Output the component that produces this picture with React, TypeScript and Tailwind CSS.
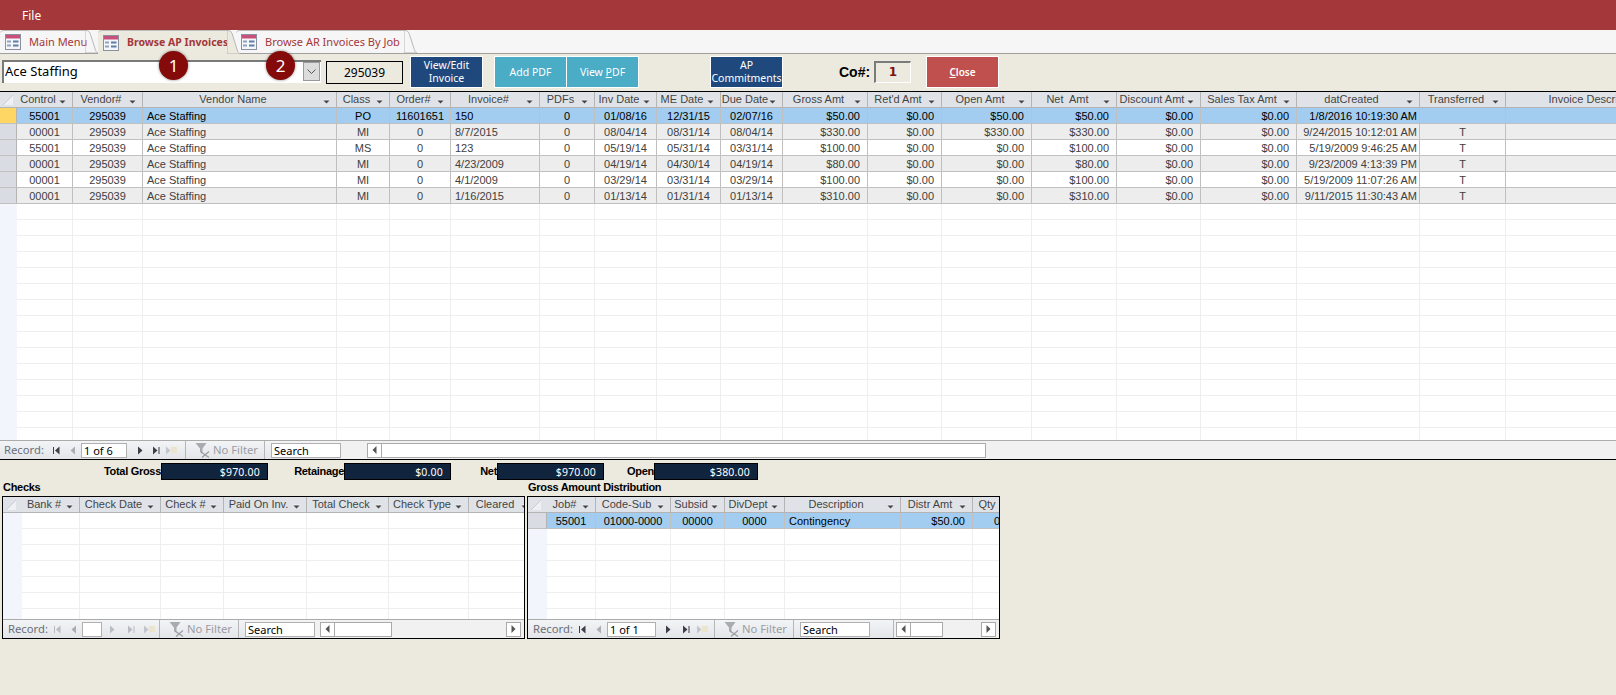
import React from "react";

type Align = "c" | "l" | "r" | "d" | "q";

const MAIN_COLS = "grid grid-cols-[17px_56px_70px_194px_53px_61px_89px_55px_62px_64px_62px_85px_74px_90px_85px_84px_96px_123px_86px_192px]";
const CHECK_COLS = "grid grid-cols-[19px_58px_81px_63px_83px_82px_80px_66px]";
const DIST_COLS = "grid grid-cols-[19px_49px_75px_54px_60px_116px_72px_42px]";

const mainHeaders = ["Control", "Vendor#", "Vendor Name", "Class", "Order#", "Invoice#", "PDFs", "Inv Date", "ME Date", "Due Date", "Gross Amt", "Ret'd Amt", "Open Amt", "Net  Amt", "Discount Amt", "Sales Tax Amt", "datCreated", "Transferred", "Invoice Description"];
const mainAlign: Align[] = ["c", "c", "l", "c", "c", "l", "c", "c", "c", "c", "r", "r", "r", "r", "r", "r", "d", "c", "l"];
const mainRows = [
  ["55001", "295039", "Ace Staffing", "PO", "11601651", "150", "0", "01/08/16", "12/31/15", "02/07/16", "$50.00", "$0.00", "$50.00", "$50.00", "$0.00", "$0.00", "1/8/2016 10:19:30 AM", "", ""],
  ["00001", "295039", "Ace Staffing", "MI", "0", "8/7/2015", "0", "08/04/14", "08/31/14", "08/04/14", "$330.00", "$0.00", "$330.00", "$330.00", "$0.00", "$0.00", "9/24/2015 10:12:01 AM", "T", ""],
  ["55001", "295039", "Ace Staffing", "MS", "0", "123", "0", "05/19/14", "05/31/14", "03/31/14", "$100.00", "$0.00", "$0.00", "$100.00", "$0.00", "$0.00", "5/19/2009 9:46:25 AM", "T", ""],
  ["00001", "295039", "Ace Staffing", "MI", "0", "4/23/2009", "0", "04/19/14", "04/30/14", "04/19/14", "$80.00", "$0.00", "$0.00", "$80.00", "$0.00", "$0.00", "9/23/2009 4:13:39 PM", "T", ""],
  ["00001", "295039", "Ace Staffing", "MI", "0", "4/1/2009", "0", "03/29/14", "03/31/14", "03/29/14", "$100.00", "$0.00", "$0.00", "$100.00", "$0.00", "$0.00", "5/19/2009 11:07:26 AM", "T", ""],
  ["00001", "295039", "Ace Staffing", "MI", "0", "1/16/2015", "0", "01/13/14", "01/31/14", "01/13/14", "$310.00", "$0.00", "$0.00", "$310.00", "$0.00", "$0.00", "9/11/2015 11:30:43 AM", "T", ""],
];

const alignClass: Record<Align, string> = {
  c: "text-center",
  l: "text-left pl-1",
  r: "text-right pr-[7px]",
  d: "text-right pr-[2px]",
  q: "text-left pl-[21px]",
};

function Arrow() {
  return (
    <svg width="7" height="5" viewBox="0 0 7 5" className="shrink-0 mr-[6px] mt-[3px]">
      <path d="M0 0.5h7" stroke="#e8eaee" />
      <path d="M0.5 1.5h6L3.5 4.5z" fill="#444" />
    </svg>
  );
}

function Header({ cols, names }: { cols: string; names: string[] }) {
  return (
    <div className={`${cols} h-4 bg-[#dfe3e8] border-b border-[#b4b4b4] text-[#444] w-max`}>
      <div className="border-r border-[#dfe3e8] overflow-hidden">
        <svg width="17" height="15" viewBox="0 0 17 15">
          <path d="M13 3v10H3z" fill="#eef0f4" />
          <path d="M13 3L3 13" stroke="#c8ccd2" />
        </svg>
      </div>
      {names.map((n) => (
        <div key={n} className="flex items-center border-r border-[#b4b4b4] overflow-hidden whitespace-pre">
          <span className="flex-1 min-w-0 overflow-hidden text-center leading-[15px]">{n}</span>
          <Arrow />
        </div>
      ))}
    </div>
  );
}

function DataRow({ cols, cells, aligns, sel, alt, yellow }: { cols: string; cells: string[]; aligns: Align[]; sel: boolean; alt: boolean; yellow?: boolean }) {
  const bg = sel ? "bg-[#a3cdf0] text-black" : alt ? "bg-[#ededed] text-[#404040]" : "bg-white text-[#404040]";
  return (
    <div className={`${cols} h-4 border-b border-[#c0c0c0] w-max`}>
      <div className={`border-r border-[#b4b4b4] ${yellow ? "bg-[#fdd663]" : "bg-[#d9dde3]"}`} />
      {cells.map((c, i) => (
        <div key={i} className={`${bg} ${alignClass[aligns[i]]} border-r border-[#c0c0c0] overflow-hidden whitespace-nowrap leading-[17px]`}>{c}</div>
      ))}
    </div>
  );
}

function EmptyRows({ cols, count, cells }: { cols: string; count: number; cells: number }) {
  const list = Array.from({ length: cells });
  return (
    <>
      {Array.from({ length: count }).map((_, r) => (
        <div key={r} className={`${cols} h-4 w-max`}>
          <div className="bg-[#f3f5fd] border-b border-[#f3f5fd]" />
          {list.map((_, i) => (
            <div key={i} className="bg-white border-r border-b border-[#eeeeee]" />
          ))}
        </div>
      ))}
    </>
  );
}

function NavIcon({ kind, off }: { kind: "first" | "prev" | "next" | "last"; off: boolean }) {
  const c = off ? "#b9bcc2" : "#3a3f48";
  return (
    <svg width="10" height="9" viewBox="0 0 10 9" className="block">
      {kind === "first" && (<><path d="M1.5 1v7" stroke={c} /><path d="M7.5 0.5v8L3 4.5z" fill={c} /></>)}
      {kind === "prev" && <path d="M7 0.5v8L2.5 4.5z" fill="#a9adb4" />}
      {kind === "next" && <path d="M3 0.5v8l4.5-4z" fill={c} />}
      {kind === "last" && (<><path d="M2 0.5v8l4.5-4z" fill={c} /><path d="M8 1v7" stroke={c} /></>)}
    </svg>
  );
}

function NewIcon() {
  return (
    <svg width="13" height="9" viewBox="0 0 13 9" className="block">
      <path d="M1 0.5v8l4.5-4z" fill="#c2c5ca" />
      <rect x="6" y="1" width="6" height="6" fill="#f2e4b0" />
      <path d="M7 1v6M9 1v6M11 1v6M6 3h6M6 5h6" stroke="#e4e6ea" strokeWidth="0.7" />
    </svg>
  );
}

function Funnel() {
  return (
    <svg width="16" height="16" viewBox="0 0 16 16" className="block shrink-0">
      <path d="M0.5 1h11L7.5 6.5V12L5 10V6.5z" fill="#a8abb0" />
      <path d="M6 10l8 5.5M14 9.5l-7 6" stroke="#9a9da3" strokeWidth="1.2" />
    </svg>
  );
}

function ScrollBtn({ dir }: { dir: "l" | "r" }) {
  return (
    <div className="w-[15px] h-[15px] bg-white border border-[#aaaaaa] flex items-center justify-center shrink-0">
      <svg width="5" height="8" viewBox="0 0 5 8">
        <path d={dir === "l" ? "M4.5 0v8L0.5 4z" : "M0.5 0v8L4.5 4z"} fill="#555" />
      </svg>
    </div>
  );
}

function Nav(props: { inputCls: string; nextCls: string; lastCls: string; newCls: string; filterCls: string; recordCls: string; value: string; off: boolean; children: React.ReactNode }) {
  const { inputCls, nextCls, lastCls, newCls, filterCls, recordCls, value, off, children } = props;
  return (
    <div className="flex shrink-0 h-[19px] border-t border-[#ababab] bg-gradient-to-b from-[#f3f4f6] to-[#e3e5e9] items-center text-[11.25px] font-['Noto_Sans',sans-serif] text-[#6a6f78] leading-none whitespace-nowrap">
      <span className={recordCls}>Record:</span>
      <span className="w-[17px] flex justify-center"><NavIcon kind="first" off={off} /></span>
      <span className="w-[16px] flex justify-center"><NavIcon kind="prev" off={off} /></span>
      <span className={`h-[15px] bg-white border border-[#b0b0b0] text-black text-[11px] pl-[2px] leading-[13px] ${inputCls}`}>{value}</span>
      <span className={`w-[18px] flex justify-center ${nextCls}`}><NavIcon kind="next" off={off} /></span>
      <span className={`flex justify-center ${lastCls}`}><NavIcon kind="last" off={off} /></span>
      <span className={`flex justify-center ${newCls}`}><NewIcon /></span>
      <span className={`h-full w-[80px] border-l border-r border-[#b6b6b6] flex items-center pl-[9px] text-[#9a9da3] gap-[2px] ${filterCls}`}>
        <Funnel />
        <span>No Filter</span>
      </span>
      <span className="h-[15px] w-[70px] ml-[6px] bg-white border border-[#b0b0b0] text-black text-[11px] pl-[2px] leading-[13px]">Search</span>
      {children}
    </div>
  );
}

function FormIcon() {
  return (
    <svg width="16" height="16" viewBox="0 0 16 16" className="shrink-0">
      <rect x="0.5" y="0.5" width="15" height="15" fill="#f4f6fa" stroke="#8a90a0" />
      <rect x="1" y="1" width="14" height="3.5" fill="#c9507a" />
      <rect x="2" y="6.5" width="4" height="2" fill="#8ea3bd" />
      <rect x="8" y="6.5" width="5.5" height="2" fill="#5f7ea3" />
      <rect x="2" y="10.5" width="4" height="2" fill="#8ea3bd" />
      <rect x="8" y="10.5" width="5.5" height="2" fill="#5f7ea3" />
    </svg>
  );
}

function Tab({ label, active, cls }: { label: string; active?: boolean; cls: string }) {
  return (
    <div className={`flex h-[23px] shrink-0 whitespace-nowrap ${cls} ${active ? "relative z-10 h-[24px] -mb-px" : ""}`}>
      <div className={`flex items-center flex-1 min-w-0 gap-[8px] pl-[5px] border-t rounded-tl-[4px] border-[#bcbcbc] text-[#a4373a] ${active ? "bg-[#ece9df] font-bold text-[10.5px]" : "text-[11px]"}`}>
        <FormIcon />
        <span>{label}</span>
      </div>
      <svg viewBox="0 0 14 24" preserveAspectRatio="none" className="shrink-0 w-[13px] h-full">
        <path d="M0 0.5h1C4 0.5 5 2 6 5l5 15c.6 2 1.5 3.5 3 4H0z" fill={active ? "#ece9df" : "none"} stroke="#b4b4b4" />
      </svg>
    </div>
  );
}

function Btn({ lines, cls }: { lines: React.ReactNode[]; cls: string }) {
  return (
    <div className={`h-8 w-[73px] border border-white text-white text-[10.5px] leading-[13px] font-['Noto_Sans',sans-serif] flex flex-col items-center justify-center ${cls}`}>
      {lines.map((l, i) => <div key={i}>{l}</div>)}
    </div>
  );
}

function Badge({ n, cls }: { n: string; cls: string }) {
  return (
    <div className={`absolute z-20 top-[-11px] w-[29px] h-[29px] rounded-full bg-[#850a0a] text-white text-[17px] flex items-center justify-center shadow-[0_0_3px_rgba(0,0,0,0.5)] font-['Noto_Sans',sans-serif] ${cls}`}>{n}</div>
  );
}

function Money({ label, value, labelW, valueW }: { label: string; value: string; labelW: string; valueW: string }) {
  return (
    <div className="flex items-center">
      <span className={`${labelW} text-right font-bold text-[11px] tracking-[-0.3px] text-black leading-none`}>{label}</span>
      <span className={`${valueW} h-[17px] bg-[#10243e] border border-black text-white text-right pr-[7px] text-[10.5px] tracking-[0.2px] leading-[16px] font-['Noto_Sans',sans-serif]`}>{value}</span>
    </div>
  );
}

export default function App() {
  return (
    <div className="w-[1616px] h-[695px] overflow-hidden bg-[#ece9df] flex flex-col font-['Liberation_Sans',sans-serif] text-[11px]">
      <div className="h-[30px] bg-[#a4373a] text-white text-[12px] font-['Noto_Sans',sans-serif] flex items-center pl-[22px] pt-px shrink-0">File</div>

      <div className="h-[24px] bg-[#f6f6f6] border-b border-[#a0a0a0] flex items-end shrink-0 font-['Noto_Sans',sans-serif]">
        <Tab label="Main Menu" cls="w-[98px]" />
        <Tab label="Browse AP Invoices" active cls="w-[142px]" />
        <Tab label="Browse AR Invoices By Job" cls="-ml-[4px] w-[181px]" />
      </div>

      <div className="h-[37px] flex shrink-0 items-start pt-[2px] relative">
        <div className="relative ml-[2px] mt-1 w-[319px] h-[23px] flex bg-white border-t-2 border-l-2 border-[#7a7a7a]">
          <span className="flex-1 text-[13px] font-['Noto_Sans',sans-serif] leading-[19px] pl-[1px] text-black">Ace Staffing</span>
          <span className="w-[17px] h-[19px] mr-[1px] bg-[#dcdcdc] border border-[#9a9a9a] flex items-center justify-center">
            <svg width="9" height="6" viewBox="0 0 9 6"><path d="M0.5 0.5l4 4 4-4" fill="none" stroke="#555" /></svg>
          </span>
          <Badge n="1" cls="left-[155px]" />
          <Badge n="2" cls="left-[262px]" />
        </div>
        <div className="ml-[5px] mt-[5px] w-[77px] h-[23px] border border-black text-center text-[12px] font-['Noto_Sans',sans-serif] leading-[21px] text-black">295039</div>
        <Btn lines={["View/Edit", "Invoice"]} cls="ml-[7px] bg-[#1f497d]" />
        <Btn lines={["Add PDF"]} cls="ml-[11px] bg-[#4bacc6]" />
        <Btn lines={[<>View <u>P</u>DF</>]} cls="-ml-px bg-[#4bacc6]" />
        <Btn lines={["AP", "Commitments"]} cls="ml-[71px] bg-[#1f497d]" />
        <span className="ml-[56px] mt-[6px] font-bold text-[14px] leading-[20px] text-black w-[35px]">Co#:</span>
        <div className="mt-[5px] w-[37px] h-[22px] border-t-2 border-l-2 border-[#7a7a7a] border-r border-b border-r-white border-b-white text-center text-[#7b1010] font-bold text-[12px] leading-[19px] font-['DejaVu_Sans',sans-serif]">1</div>
        <Btn lines={[<><u>C</u>lose</>]} cls="ml-[15px] bg-[#c0504d] font-semibold text-[10px]" />
      </div>

      <div className="h-[369px] shrink-0 border-t border-b border-black flex flex-col overflow-hidden bg-white">
        <div className="flex-1 min-h-0 overflow-hidden">
          <Header cols={MAIN_COLS} names={mainHeaders} />
          {mainRows.map((r, i) => (
            <DataRow key={i} cols={MAIN_COLS} cells={r} aligns={mainAlign} sel={i === 0} yellow={i === 0} alt={i % 2 === 1} />
          ))}
          <EmptyRows cols={MAIN_COLS} count={15} cells={19} />
        </div>
        <Nav recordCls="w-[44px] ml-[4px]" inputCls="w-[46px]" nextCls="ml-[4px]" lastCls="w-[14px]" newCls="w-[17px]" filterCls="ml-[5px]" value="1 of 6" off={false}>
          <div className="flex-1 h-full bg-[#f1f1f1] flex items-center pl-[26px]">
            <ScrollBtn dir="l" />
            <div className="w-[604px] h-[15px] bg-white border-y border-r border-[#aaaaaa]" />
          </div>
        </Nav>
      </div>

      <div className="h-[17px] mt-[3px] flex shrink-0">
        <Money label="Total Gross" value="$970.00" labelW="w-[161px]" valueW="w-[107px]" />
        <Money label="Retainage" value="$0.00" labelW="w-[76px]" valueW="w-[107px]" />
        <Money label="Net" value="$970.00" labelW="w-[46px]" valueW="w-[107px]" />
        <Money label="Open" value="$380.00" labelW="w-[50px]" valueW="w-[104px]" />
      </div>

      <div className="flex h-[16px] pb-[2px] items-center shrink-0 font-bold text-[11px] tracking-[-0.3px] text-black">
        <span className="w-[528px] pl-[3px]">Checks</span>
        <span>Gross Amount Distribution</span>
      </div>

      <div className="flex shrink-0">
        <div className="ml-[2px] w-[523px] h-[143px] border border-black bg-white flex flex-col overflow-hidden">
          <div className="flex-1 min-h-0 overflow-hidden">
            <Header cols={CHECK_COLS} names={["Bank #", "Check Date", "Check #", "Paid On Inv.", "Total Check", "Check Type", "Cleared"]} />
            <EmptyRows cols={CHECK_COLS} count={7} cells={7} />
          </div>
          <Nav recordCls="w-[41px] ml-[5px]" inputCls="w-[20px]" nextCls="ml-[1px]" lastCls="w-[19px]" newCls="w-[19px]" filterCls="" value="" off>
            <div className="flex-1 h-full bg-[#f1f1f1] flex items-center pl-[5px] pr-[3px]">
              <ScrollBtn dir="l" />
              <div className="w-[57px] h-[15px] bg-white border-y border-r border-[#aaaaaa]" />
              <div className="flex-1" />
              <ScrollBtn dir="r" />
            </div>
          </Nav>
        </div>
        <div className="ml-[2px] w-[473px] h-[143px] border border-black bg-white flex flex-col overflow-hidden">
          <div className="flex-1 min-h-0 overflow-hidden">
            <Header cols={DIST_COLS} names={["Job#", "Code-Sub", "Subsid", "DivDept", "Description", "Distr Amt", "Qty"]} />
            <DataRow cols={DIST_COLS} cells={["55001", "01000-0000", "00000", "0000", "Contingency", "$50.00", "0"]} aligns={["c", "c", "c", "c", "l", "r", "q"]} sel alt={false} />
            <EmptyRows cols={DIST_COLS} count={6} cells={7} />
          </div>
          <Nav recordCls="w-[41px] ml-[5px]" inputCls="w-[49px]" nextCls="ml-[3px]" lastCls="w-[17px]" newCls="w-[17px]" filterCls="ml-[3px]" value="1 of 1" off={false}>
            <div className="flex-1 h-full bg-[#f1f1f1] flex items-center pl-[2px] pr-[3px] border-l border-[#b6b6b6] ml-[23px]">
              <ScrollBtn dir="l" />
              <div className="w-[32px] h-[15px] bg-white border-y border-r border-[#aaaaaa]" />
              <div className="flex-1" />
              <ScrollBtn dir="r" />
            </div>
          </Nav>
        </div>
      </div>
    </div>
  );
}
